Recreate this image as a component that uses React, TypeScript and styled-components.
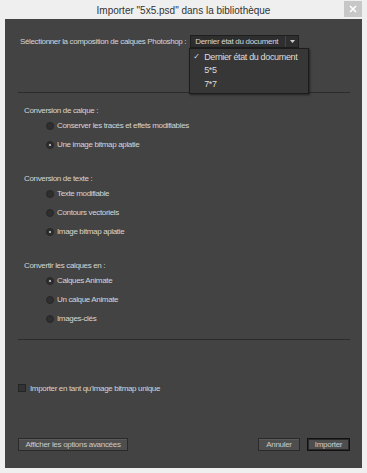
import React, { useState } from "react";
import styled, { createGlobalStyle } from "styled-components";

const GlobalStyle = createGlobalStyle`
  html, body {
    margin: 0;
    padding: 0;
    background: #efefef;
  }
  * {
    box-sizing: border-box;
  }
`;

const uiFont = `"Liberation Sans", Arial, sans-serif`;

const sections = [
  {
    title: "Conversion de calque :",
    options: ["Conserver les tracés et effets modifiables", "Une image bitmap aplatie"],
    selected: 1,
  },
  {
    title: "Conversion de texte :",
    options: ["Texte modifiable", "Contours vectoriels", "Image bitmap aplatie"],
    selected: 2,
  },
  {
    title: "Convertir les calques en :",
    options: ["Calques Animate", "Un calque Animate", "Images-clés"],
    selected: 0,
  },
];

function App() {
  const [picked, setPicked] = useState(sections.map((s) => s.selected));
  const [single, setSingle] = useState(false);

  return (
    <>
      <GlobalStyle />
      <Window>
        <TitleBar>
          <Title>Importer "5x5.psd" dans la bibliothèque</Title>
          <CloseButton>
            <svg width="8" height="8" viewBox="0 0 8 8">
              <path d="M1 1 L7 7 M7 1 L1 7" stroke="#fff" strokeWidth="1.6" />
            </svg>
          </CloseButton>
        </TitleBar>
        <Content>
          <SelectRow>
            <Text>Sélectionner la composition de calques Photoshop :</Text>
            <SelectWrap>
              <SelectBox>
                <SelectValue>Dernier état du document</SelectValue>
                <SelectArrow>
                  <svg width="5" height="3" viewBox="0 0 5 3">
                    <path d="M0 0 H5 L2.5 3 Z" fill="#cfcfcf" />
                  </svg>
                </SelectArrow>
              </SelectBox>
              <Menu>
                <MenuItem>
                  <Check>✓</Check>Dernier état du document
                </MenuItem>
                <MenuItem>5*5</MenuItem>
                <MenuItem>7*7</MenuItem>
              </Menu>
            </SelectWrap>
          </SelectRow>

          <Separator $top={44} />

          <Sections>
            {sections.map((s, si) => (
              <Group key={s.title}>
                <Text>{s.title}</Text>
                <Options>
                  {s.options.map((o, oi) => (
                    <RadioRow
                      key={o}
                      onClick={() =>
                        setPicked(picked.map((p, i) => (i === si ? oi : p)))
                      }
                    >
                      <Radio $on={picked[si] === oi} />
                      <Text>{o}</Text>
                    </RadioRow>
                  ))}
                </Options>
              </Group>
            ))}
          </Sections>

          <Separator $top={15} />

          <CheckRow onClick={() => setSingle(!single)}>
            <CheckBox />
            <Text>Importer en tant qu’image bitmap unique</Text>
          </CheckRow>

          <Footer>
            <Button $w={110}>Afficher les options avancées</Button>
            <Actions>
              <Button $w={42}>Annuler</Button>
              <Button $w={43} $primary>
                Importer
              </Button>
            </Actions>
          </Footer>
        </Content>
      </Window>
    </>
  );
}

export default App;

const Window = styled.div`
  width: 367px;
  height: 473px;
  background: #efefef;
  display: flex;
  flex-direction: column;
  padding: 0 5px 5px 5px;
  font-family: ${uiFont};
`;

const TitleBar = styled.div`
  height: 19px;
  display: flex;
  align-items: center;
  justify-content: center;
  position: relative;
`;

const Title = styled.div`
  font-family: "Liberation Sans", Arial, sans-serif;
  font-size: 10px;
  color: #333;
  margin-top: 1px;
`;

const CloseButton = styled.div`
  position: absolute;
  right: 0;
  top: 1px;
  width: 18px;
  height: 16px;
  background: #c7c7c7;
  display: flex;
  align-items: center;
  justify-content: center;
`;

const Content = styled.div`
  flex: 1;
  background: #434343;
  padding: 16px 12px 0 13px;
  display: flex;
  flex-direction: column;
`;

const Text = styled.span`
  font-family: ${uiFont};
  font-size: 8px;
  letter-spacing: -0.35px;
  color: #d6d6d6;
  white-space: nowrap;
`;

const SelectRow = styled.div`
  display: flex;
  align-items: center;
  gap: 4px;
  padding-left: 2px;
  height: 13px;
`;

const SelectWrap = styled.div`
  position: relative;
`;

const SelectBox = styled.div`
  width: 109px;
  height: 13px;
  background: #2e2e2e;
  border: 1px solid #1f1f1f;
  display: flex;
  align-items: center;
`;

const SelectValue = styled.span`
  flex: 1;
  font-size: 8px;
  letter-spacing: -0.3px;
  color: #d6d6d6;
  padding-left: 4px;
  white-space: nowrap;
`;

const SelectArrow = styled.span`
  width: 13px;
  height: 100%;
  border-left: 1px solid #454545;
  display: flex;
  align-items: center;
  justify-content: center;
`;

const Menu = styled.div`
  position: absolute;
  left: -1px;
  top: 13px;
  width: 120px;
  background: #373737;
  border: 1px solid #1c1c1c;
  box-shadow: 1px 1px 2px rgba(0, 0, 0, 0.5);
  padding: 1px 0 2px 0;
  display: flex;
  flex-direction: column;
  z-index: 2;
`;

const MenuItem = styled.div`
  font-size: 9px;
  letter-spacing: -0.35px;
  color: #dcdcdc;
  height: 13.5px;
  display: flex;
  align-items: center;
  padding-left: 14px;
  position: relative;
  white-space: nowrap;
`;

const Check = styled.span`
  position: absolute;
  left: 3px;
  font-family: "DejaVu Sans", sans-serif;
  font-size: 8px;
`;

const Separator = styled.div<{ $top: number }>`
  height: 1px;
  flex-shrink: 0;
  background: #2c2c2c;
  margin-top: ${(p) => p.$top}px;
`;

const Sections = styled.div`
  display: flex;
  flex-direction: column;
  gap: 24px;
  padding: 13px 0 0 6px;
`;

const Group = styled.div`
  display: flex;
  flex-direction: column;
  gap: 5px;
`;

const Options = styled.div`
  display: flex;
  flex-direction: column;
  gap: 8px;
  padding-left: 22px;
`;

const RadioRow = styled.div`
  display: flex;
  align-items: center;
  gap: 3px;
  height: 11px;
  cursor: default;
`;

const Radio = styled.span<{ $on: boolean }>`
  width: 8px;
  height: 8px;
  border-radius: 50%;
  background: #2f2f2f;
  border: 1px solid #262626;
  display: flex;
  align-items: center;
  justify-content: center;
  &::after {
    content: "";
    width: 2px;
    height: 2px;
    border-radius: 50%;
    background: ${(p) => (p.$on ? "#d0d0d0" : "transparent")};
  }
`;

const CheckRow = styled.div`
  display: flex;
  align-items: center;
  gap: 4px;
  height: 10px;
  margin-top: 43px;
`;

const CheckBox = styled.span`
  width: 8px;
  height: 8px;
  background: #333;
  border: 1px solid #252525;
`;

const Footer = styled.div`
  display: flex;
  justify-content: space-between;
  margin-top: 45px;
`;

const Actions = styled.div`
  display: flex;
  gap: 7px;
`;

const Button = styled.button<{ $primary?: boolean; $w: number }>`
  width: ${(p) => p.$w}px;
  height: 13px;
  padding: 0;
  font-family: ${uiFont};
  font-size: 8px;
  letter-spacing: -0.3px;
  color: #cacaca;
  background: #4e4e4e;
  border: 1px solid ${(p) => (p.$primary ? "#111" : "#2a2a2a")};
  box-shadow: ${(p) => (p.$primary ? "inset 0 0 0 1px #2a2a2a" : "inset 0 1px 0 #5a5a5a")};
  white-space: nowrap;
`;
